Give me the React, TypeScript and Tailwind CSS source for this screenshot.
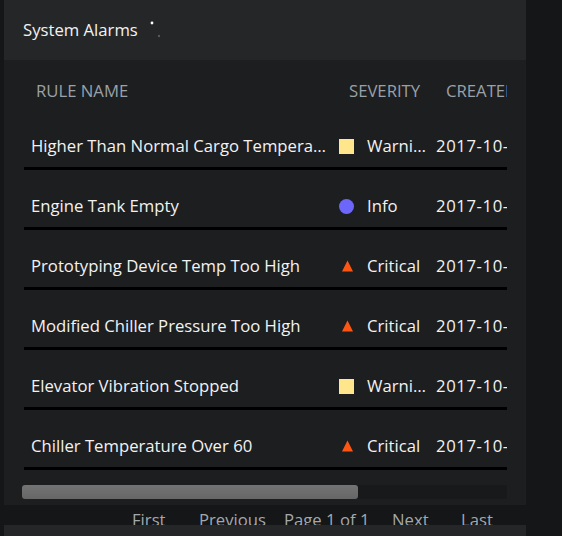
import React from "react";

type Severity = "warning" | "info" | "critical";

const ALARMS: { name: string; severity: Severity; created: string }[] = [
  { name: "Higher Than Normal Cargo Temperature", severity: "warning", created: "2017-10-24" },
  { name: "Engine Tank Empty", severity: "info", created: "2017-10-24" },
  { name: "Prototyping Device Temp Too High", severity: "critical", created: "2017-10-24" },
  { name: "Modified Chiller Pressure Too High", severity: "critical", created: "2017-10-24" },
  { name: "Elevator Vibration Stopped", severity: "warning", created: "2017-10-24" },
  { name: "Chiller Temperature Over 60", severity: "critical", created: "2017-10-24" },
];

const SeverityIcon = ({ severity }: { severity: Severity }) => {
  if (severity === "warning") return <div className="w-[15px] h-[15px] shrink-0 bg-[#ffe58c]" />;
  if (severity === "info") return <div className="w-[15px] h-[15px] shrink-0 rounded-full bg-[#6d66fb]" />;
  return (
    <svg width="15" height="15" viewBox="0 0 15 15" className="shrink-0">
      <polygon points="8.5,1.5 14,12.5 3,12.5" fill="#ff5512" />
    </svg>
  );
};

const label = (s: Severity) => (s === "warning" ? "Warning" : s === "info" ? "Info" : "Critical");

const App = () => {
  return (
    <div
      className="w-[562px] h-[536px] overflow-hidden bg-[#151618] text-[16.7px]"
      style={{ fontFamily: '"Open Sans", "Noto Sans", sans-serif' }}
    >
      <div className="ml-1 w-[522px]">
        {/* panel header */}
        <div className="h-[60px] bg-[#252628] flex items-center pl-[19px]">
          <span className="text-[#f2f2f2] leading-[22px]">System Alarms</span>
          <svg width="20" height="24" viewBox="0 0 20 24" className="ml-[10px] mb-[2px]">
            <circle cx="4" cy="6" r="1.4" fill="#ffffff" />
            <circle cx="11" cy="19" r="1.2" fill="#55585c" />
          </svg>
        </div>

        {/* body */}
        <div className="h-[445px] bg-[#1d1e20] pl-5">
          <div className="w-[483px] overflow-hidden">
            <div className="flex h-[50px] pt-[20px] text-[#9aa1a8] leading-[22px] uppercase whitespace-nowrap">
              <div className="w-[308px] pl-[12px]">Rule Name</div>
              <div className="w-[97px] pl-[17px]">Severity</div>
              <div className="flex-1 pl-[17px] overflow-hidden">Created</div>
            </div>
            {ALARMS.map((a, i) => (
              <div
                key={i}
                className="flex items-start h-[60px] pt-[25px] border-b-[3px] border-black text-[#f2f2f2] leading-[22px] whitespace-nowrap"
              >
                <div className="w-[308px] pl-[7px] pr-[2px] truncate">{a.name}</div>
                <div className="w-[98px] h-[22px] pl-[7px] flex items-center gap-[13px]">
                  <SeverityIcon severity={a.severity} />
                  <span className="truncate">{label(a.severity)}</span>
                </div>
                <div className="flex-1 pl-[6px] overflow-hidden tracking-[0.6px]">{a.created}</div>
              </div>
            ))}
          </div>

          {/* horizontal scrollbar */}
          <div className="mt-[15px] -ml-[2px] w-[485px] h-[14px] bg-[#18191b] rounded-[2px]">
            <div className="w-[336px] h-[14px] rounded-[3px] bg-gradient-to-b from-[#747474] to-[#666666]" />
          </div>
        </div>

        {/* pager */}
        <div className="h-[20px] overflow-hidden bg-[#151618] text-[#a3a8ad] leading-[22px] whitespace-nowrap">
          <div className="flex pt-[4px] pl-[128px]">
            <span className="w-[67px]">First</span>
            <span className="w-[85px]">Previous</span>
            <span className="w-[108px]">Page 1 of 1</span>
            <span className="w-[69px]">Next</span>
            <span>Last</span>
          </div>
        </div>
        <div className="h-[11px] bg-[#252628]" />
      </div>
    </div>
  );
};

export default App;
